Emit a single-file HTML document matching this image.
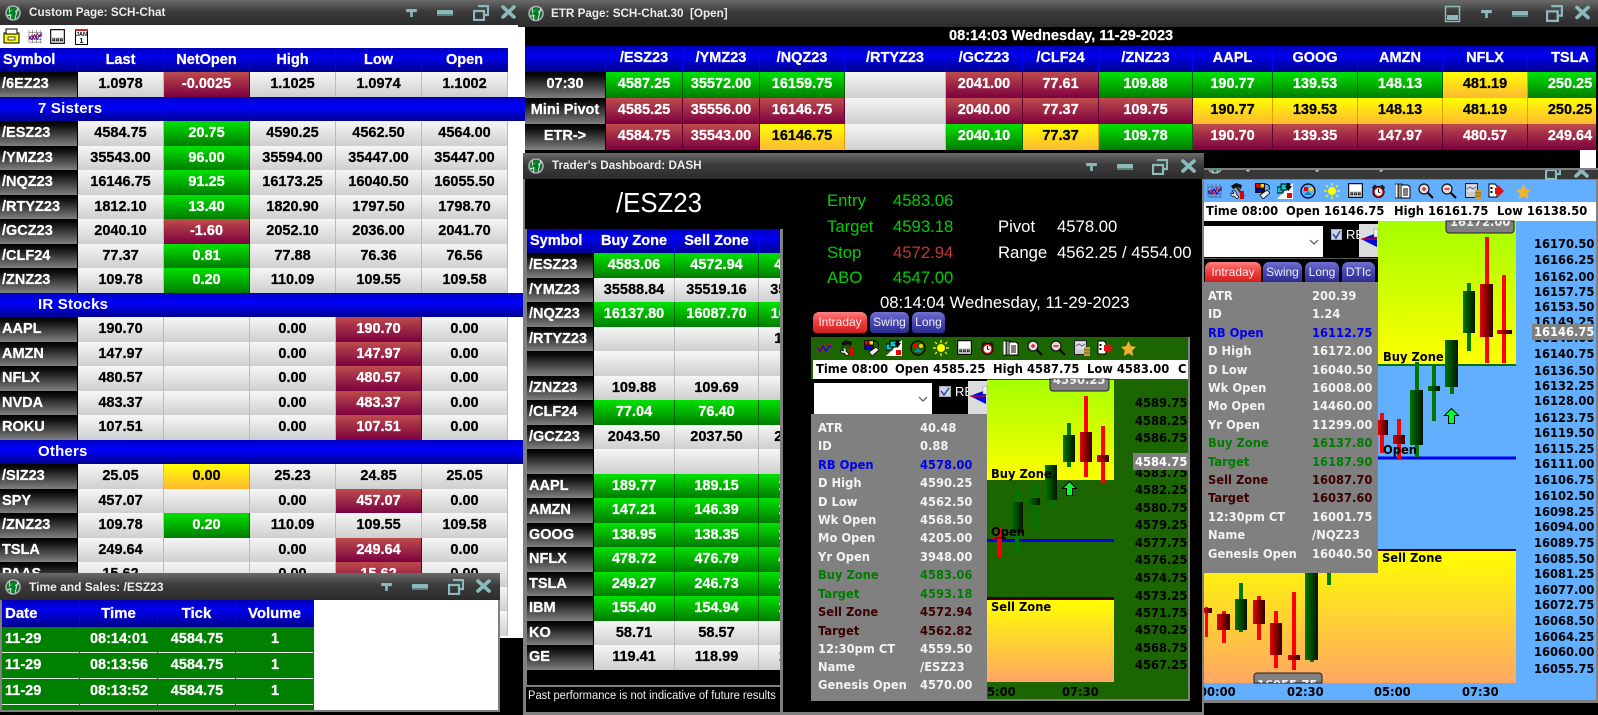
<!DOCTYPE html>
<html><head><meta charset="utf-8"><style>
html,body{margin:0;padding:0;background:#000;width:1598px;height:715px;overflow:hidden}
body{position:relative;font-family:"Liberation Sans",sans-serif}
.a{position:absolute;white-space:nowrap}
.box{position:absolute;overflow:hidden}
.tb{position:absolute;background:linear-gradient(#6a6a6a,#3c3c3c 45%,#2c2c2c)}
.t{position:absolute;font:bold 11.7px/14px "Liberation Sans",sans-serif;color:#ececec;white-space:nowrap}
.svg{position:absolute;left:0;top:0;width:1598px;height:715px;overflow:hidden}
.r{position:absolute;display:flex;height:24.5px}
.r b{display:block;flex:none;box-sizing:border-box;height:100%;text-align:center;font:bold 14.5px/24px "Liberation Sans",sans-serif;-webkit-text-stroke:.25px;border-right:1px solid #bbb;white-space:nowrap;overflow:hidden}
.s{background:linear-gradient(#000,#111 20%,#808080);color:#fff;text-align:left!important;padding-left:2px;border-right:1px solid #000!important}
.w{background:linear-gradient(#f6f6f6,#cfcfcf);color:#000}
.g{background:linear-gradient(#00e200,#007c00);color:#fff;border-right-color:#006000!important}
.m{background:linear-gradient(#bd4c4c,#7c0040);color:#fff;border-right-color:#600030!important}
.y{background:linear-gradient(#ffff00,#ffb733);color:#000;border-right-color:#e0a000!important}
.h{background:linear-gradient(#0000b8,#0000f0 35%,#00008c);color:#fff;border-right-color:#0000ff!important}
#L .r b:nth-child(1){width:78px}
#L .r b{width:86px}
#E .r b:nth-child(1){width:81px;text-align:center!important;padding:0}
#E .r b:nth-child(2),#E .r b:nth-child(3),#E .r b:nth-child(6){width:77px}
#E .r b:nth-child(4){width:85px}
#E .r b:nth-child(5){width:101px}
#E .r b:nth-child(7){width:76px}
#E .r b:nth-child(8){width:94px}
#E .r b:nth-child(9){width:80px}
#E .r b:nth-child(n+10){width:85px}
#E .r{height:26px}
#E .r b{line-height:25px}
#D .r b:nth-child(1){width:67px}
#D .r b:nth-child(2){width:81px}
#D .r b:nth-child(3){width:84px}
#D .r b:nth-child(4){width:84px}
.sec{position:absolute;left:0;width:525px;height:24px;background:linear-gradient(#0000c0,#0000ff 40%,#000090);color:#fff;font:bold 15px/24px "Liberation Sans",sans-serif;padding-left:38px;box-sizing:border-box;letter-spacing:.2px}
.reg{position:absolute;white-space:nowrap;font:16.7px/18px "Liberation Sans",sans-serif;color:#fff}
.k{position:absolute;white-space:nowrap;font:bold 12.5px/14px "DejaVu Sans",sans-serif;color:#f2f2f2;transform:scaleX(.92);transform-origin:0 0}
.kb{color:#0000f0}.kg{color:#007c00}.kd{color:#3c0000}
.ax{position:absolute;white-space:nowrap;font:bold 12.5px/14px "DejaVu Sans",sans-serif;color:#000;transform:scaleX(.92);transform-origin:0 0}
.tab{position:absolute;box-sizing:border-box;border-radius:6px 6px 3px 3px;color:#eee;font:12px/20px "Liberation Sans",sans-serif;text-align:center}
.tr{background:linear-gradient(#ff8080,#f03a3a 50%,#d02020)}
.tp{background:linear-gradient(#7070d0,#4646b0 50%,#2c2c90)}
.th{position:absolute;font:bold 15px/27px "Liberation Sans",sans-serif;-webkit-text-stroke:.25px;color:#fff;text-align:center;box-sizing:border-box;height:27px;background:linear-gradient(#0000b8,#0000f0 35%,#00008c);border-right:1px solid #0000ff}
.ts{position:absolute;font:bold 14.5px/25px "Liberation Sans",sans-serif;-webkit-text-stroke:.25px;color:#fff;text-align:center;box-sizing:border-box;height:25px}
</style></head><body>

<svg width="0" height="0" style="position:absolute">
<defs>
<linearGradient id="cg" x1="0" x2="1" y1="0" y2="0"><stop offset="0" stop-color="#007800"/><stop offset="1" stop-color="#001400"/></linearGradient>
<linearGradient id="cr" x1="0" x2="1" y1="0" y2="0"><stop offset="0" stop-color="#e60000"/><stop offset="1" stop-color="#2a0000"/></linearGradient>
<radialGradient id="gl" cx=".45" cy=".5" r=".55"><stop offset="0" stop-color="#30e030"/><stop offset=".6" stop-color="#0a7a20"/><stop offset="1" stop-color="#063"/></radialGradient>
<symbol id="glb" viewBox="0 0 18 18"><circle cx="9" cy="9" r="7" fill="url(#gl)" stroke="#aab" stroke-width="1.6"/><path d="M3 11C7 14 13 4 15 6M5 3l2 13M14 3l-3 12" stroke="#ddd" fill="none" stroke-width="1"/><path d="M5 9l6-4v8z" fill="#073"/></symbol>
<symbol id="pin" viewBox="0 0 12 9"><path d="M0 0h12v3.500H7.500V9h-3V3.500H0z" fill="#8cb9b9"/></symbol>
<symbol id="min" viewBox="0 0 16 6"><rect width="16" height="6" rx="1" fill="#8cb9b9"/><rect y="4" width="16" height="2" fill="#5c8080"/></symbol>
<symbol id="res" viewBox="0 0 16 16"><path d="M5 1h10v9h-3M1 6h10v9H1z" fill="none" stroke="#8cb9b9" stroke-width="2.200"/></symbol>
<symbol id="xx" viewBox="0 0 15 14"><path d="M2 2l11 10M13 2L2 12" stroke="#8cb9b9" stroke-width="3.600" stroke-linecap="round"/></symbol>
<symbol id="i1" viewBox="0 0 16 16"><path d="M1 1v13h14M1 4h14M1 8h14M1 11h14M5 1v14M9 1v14M13 1v14" stroke="#444" stroke-width=".5" fill="none"/><path d="M1 11l3-4 3 4 3-6 2 3 3-4" stroke="#e00" fill="none" stroke-width="1"/><path d="M1 8l3 3 3-5 3 5 3-5 2 1" stroke="#00e" fill="none" stroke-width="1"/></symbol>
<symbol id="i2" viewBox="0 0 16 16"><path d="M1 3l5-3 6 2-1 4-3-2-5 2z" fill="#111"/><path d="M6 5l2-1 7 9-2 1z" fill="#443300"/><path d="M10 8h4v8h-4z" fill="#d00"/><path d="M2 8c3-1 5 1 4 3l3 3-2 2-3-3c-2 1-4-1-3-3l2 1 1-1z" fill="#eee" stroke="#000" stroke-width=".7"/></symbol>
<symbol id="i3" viewBox="0 0 16 16"><rect x="1" y="0" width="10" height="10" fill="#111"/><rect x="2" y="1" width="3.500" height="3.500" fill="#e00"/><rect x="6.500" y="1" width="3.500" height="3.500" fill="#fc0"/><path d="M2 9l3.500-4 3.500 4z" fill="#00e"/><path d="M6 12l7-5 3 3-7 6z" fill="#eee" stroke="#000" stroke-width=".8"/><path d="M11 1c4 0 5 3 4 6" fill="none" stroke="#000"/></symbol>
<symbol id="i4" viewBox="0 0 16 16"><path d="M0 16L16 0v16z" fill="#fff"/><rect x="0" y="4" width="6" height="6" fill="#0cc" stroke="#000"/><rect x="4" y="1" width="6" height="6" fill="#0cc" stroke="#000"/><path d="M10 0h3v3h2l-3.500 5L8 3h2z" fill="#000"/><rect x="10" y="10" width="5" height="5" fill="#e00"/></symbol>
<symbol id="i5" viewBox="0 0 16 16"><circle cx="8" cy="8" r="7" fill="none" stroke="#000" stroke-width="1.200"/><rect x="4" y="4" width="4" height="4" fill="#e00"/><circle cx="11" cy="6" r="2" fill="#fc0"/><path d="M4 12l4-4 4 4z" fill="#08c"/></symbol>
<symbol id="i6" viewBox="0 0 16 16"><circle cx="8" cy="8" r="4" fill="#ff0"/><path d="M8 0v3M8 13v3M0 8h3M13 8h3M2 2l2 2M12 12l2 2M14 2l-2 2M2 14l2-2" stroke="#ff0" stroke-width="1.200"/></symbol>
<symbol id="i7" viewBox="0 0 16 16"><rect x=".7" y=".7" width="14.600" height="14.600" fill="#fff" stroke="#000" stroke-width="1.200"/><rect x="1.500" y="9" width="13" height="5.500" fill="#ccc"/><path d="M3 10.500h2v2H3zM7 10.500h2v2H7zM11 10.500h2v2h-2z" fill="none" stroke="#000" stroke-width=".8"/></symbol>
<symbol id="i8" viewBox="0 0 16 16"><circle cx="8" cy="9" r="6" fill="#e01010" stroke="#000"/><circle cx="8" cy="9" r="4" fill="#fff"/><path d="M8 6v3l2 1" stroke="#000" fill="none"/><path d="M1 4l3-3 2 1-4 4zM15 4l-3-3-2 1 4 4z" fill="#222"/></symbol>
<symbol id="i9" viewBox="0 0 16 16"><path d="M0 1h4v14H0zM3 1h4v14H3z" fill="#fff" stroke="#000" stroke-width=".8"/><path d="M6 2h7l2 2v11H6z" fill="#fff" stroke="#000"/><path d="M8 6h5M8 8h5M8 10h5M8 12h5" stroke="#000"/></symbol>
<symbol id="i10" viewBox="0 0 16 16"><circle cx="6" cy="6" r="5" fill="#ddd" stroke="#111" stroke-width="1.200"/><path d="M4 6h4M6 4v4" stroke="#e00" stroke-width="1.200"/><path d="M10 10l5 5" stroke="#000" stroke-width="2"/></symbol>
<symbol id="i11" viewBox="0 0 16 16"><circle cx="6" cy="6" r="5" fill="#ddd" stroke="#111" stroke-width="1.200"/><path d="M3.500 6h5" stroke="#e00" stroke-width="1.400"/><path d="M10 10l5 5" stroke="#000" stroke-width="2"/></symbol>
<symbol id="i12" viewBox="0 0 16 16"><rect x=".5" y=".5" width="12" height="14" fill="#ccc" stroke="#222"/><rect x="2" y="2" width="9" height="7" fill="#dde"/><path d="M2 6l3-2 3 2 3-2" stroke="#567" fill="none"/><path d="M10 7h6v9h-6z" fill="#c9a030"/><path d="M10 10h6M10 13h6" stroke="#664"/></symbol>
<symbol id="i13" viewBox="0 0 16 16"><path d="M1 1h6l2 2v11H1z" fill="#fff" stroke="#000"/><rect x="2.500" y="4" width="2" height="2" fill="#000"/><rect x="2.500" y="8" width="2" height="2" fill="#000"/><path d="M7 5h3V2l6 6-6 6v-3H7z" fill="#e01010"/></symbol>
<symbol id="i14" viewBox="0 0 16 16"><path d="M8 0l2.500 5.500 5.500.7-4 4 1 5.800-5-3-5 3 1-5.800-4-4 5.500-.7z" fill="#f2b230"/></symbol>
</defs></svg>

<!-- LEFT WINDOW -->
<div id="L" class="box" style="left:0;top:0;width:525px;height:638px;background:#fff">
<div class="tb" style="left:0;top:0;width:525px;height:25px"></div>
<svg class="svg" style="height:60px"><use href="#glb" x="4" y="3" width="18" height="20"/><use href="#pin" x="406" y="9" width="11" height="8"/><use href="#min" x="437" y="10" width="16" height="6"/><use href="#res" x="473" y="5" width="16" height="16"/><use href="#xx" x="501" y="5" width="15" height="14"/>
<path d="M4 33h15v10H4z" fill="#ff0" stroke="#000"/><path d="M6 29h11v5H6z" fill="#fff" stroke="#000"/><rect x="8" y="37" width="7" height="3" fill="#fff" stroke="#000" stroke-width=".7"/>
<use href="#i1" x="28" y="29" width="15" height="15"/>
<use href="#i7" x="50" y="29" width="15" height="15"/>
<path d="M75.500 29.500h12v15h-12z" fill="#fff" stroke="#000"/><path d="M75 29h13v2H75z" fill="#d22"/><text x="81.500" y="36" font-size="5.500" font-weight="bold" text-anchor="middle" font-family="Liberation Sans,sans-serif">JAN</text><text x="81.500" y="43" font-size="7" font-weight="bold" text-anchor="middle" font-family="Liberation Sans,sans-serif">1</text></svg>
<div class="t" style="left:29px;top:6px">Custom Page: SCH-Chat</div>
<div class="r" style="top:48px;height:24px"><b class="h" style="text-align:left;padding-left:3px;line-height:24px">Symbol</b><b class="h">Last</b><b class="h">NetOpen</b><b class="h">High</b><b class="h">Low</b><b class="h">Open</b></div>
<div class="r" style="top:72px"><b class="s">/6EZ23</b><b class="w">1.0978</b><b class="m">-0.0025</b><b class="w">1.1025</b><b class="w">1.0974</b><b class="w">1.1002</b></div>
<div class="sec" style="top:97px">7 Sisters</div>
<div class="r" style="top:121px"><b class="s">/ESZ23</b><b class="w">4584.75</b><b class="g">20.75</b><b class="w">4590.25</b><b class="w">4562.50</b><b class="w">4564.00</b></div>
<div class="r" style="top:145.5px"><b class="s">/YMZ23</b><b class="w">35543.00</b><b class="g">96.00</b><b class="w">35594.00</b><b class="w">35447.00</b><b class="w">35447.00</b></div>
<div class="r" style="top:170px"><b class="s">/NQZ23</b><b class="w">16146.75</b><b class="g">91.25</b><b class="w">16173.25</b><b class="w">16040.50</b><b class="w">16055.50</b></div>
<div class="r" style="top:194.5px"><b class="s">/RTYZ23</b><b class="w">1812.10</b><b class="g">13.40</b><b class="w">1820.90</b><b class="w">1797.50</b><b class="w">1798.70</b></div>
<div class="r" style="top:219px"><b class="s">/GCZ23</b><b class="w">2040.10</b><b class="m">-1.60</b><b class="w">2052.10</b><b class="w">2036.00</b><b class="w">2041.70</b></div>
<div class="r" style="top:243.5px"><b class="s">/CLF24</b><b class="w">77.37</b><b class="g">0.81</b><b class="w">77.88</b><b class="w">76.36</b><b class="w">76.56</b></div>
<div class="r" style="top:268px"><b class="s">/ZNZ23</b><b class="w">109.78</b><b class="g">0.20</b><b class="w">110.09</b><b class="w">109.55</b><b class="w">109.58</b></div>
<div class="sec" style="top:292.5px">IR Stocks</div>
<div class="r" style="top:317px"><b class="s">AAPL</b><b class="w">190.70</b><b class="w"></b><b class="w">0.00</b><b class="m">190.70</b><b class="w">0.00</b></div>
<div class="r" style="top:341.5px"><b class="s">AMZN</b><b class="w">147.97</b><b class="w"></b><b class="w">0.00</b><b class="m">147.97</b><b class="w">0.00</b></div>
<div class="r" style="top:366px"><b class="s">NFLX</b><b class="w">480.57</b><b class="w"></b><b class="w">0.00</b><b class="m">480.57</b><b class="w">0.00</b></div>
<div class="r" style="top:390.5px"><b class="s">NVDA</b><b class="w">483.37</b><b class="w"></b><b class="w">0.00</b><b class="m">483.37</b><b class="w">0.00</b></div>
<div class="r" style="top:415px"><b class="s">ROKU</b><b class="w">107.51</b><b class="w"></b><b class="w">0.00</b><b class="m">107.51</b><b class="w">0.00</b></div>
<div class="sec" style="top:439.5px">Others</div>
<div class="r" style="top:464px"><b class="s">/SIZ23</b><b class="w">25.05</b><b class="y">0.00</b><b class="w">25.23</b><b class="w">24.85</b><b class="w">25.05</b></div>
<div class="r" style="top:488.5px"><b class="s">SPY</b><b class="w">457.07</b><b class="w"></b><b class="w">0.00</b><b class="m">457.07</b><b class="w">0.00</b></div>
<div class="r" style="top:513px"><b class="s">/ZNZ23</b><b class="w">109.78</b><b class="g">0.20</b><b class="w">110.09</b><b class="w">109.55</b><b class="w">109.58</b></div>
<div class="r" style="top:537.5px"><b class="s">TSLA</b><b class="w">249.64</b><b class="w"></b><b class="w">0.00</b><b class="m">249.64</b><b class="w">0.00</b></div>
<div class="r" style="top:562px"><b class="s">PAAS</b><b class="w">15.62</b><b class="w"></b><b class="w">0.00</b><b class="m">15.62</b><b class="w">0.00</b></div>
<div class="r" style="top:586.5px"><b class="s"></b><b class="w"></b><b class="w"></b><b class="w"></b><b class="w"></b><b class="w"></b></div>
<div class="r" style="top:611px"><b class="s"></b><b class="w"></b><b class="w"></b><b class="w"></b><b class="w"></b><b class="w"></b></div>
</div>

<!-- ETR WINDOW -->
<div class="tb" style="left:518px;top:0;width:1080px;height:27px"></div>
<svg class="svg"><use href="#glb" x="527" y="3" width="18" height="21"/>
<rect x="1445.500" y="6.500" width="14" height="15" fill="none" stroke="#8cb9b9" stroke-width="1.500"/><rect x="1447" y="15" width="11" height="5" fill="#8cb9b9"/>
<use href="#pin" x="1481" y="10" width="11" height="8"/><use href="#min" x="1512" y="11" width="16" height="6"/><use href="#res" x="1546" y="5" width="17" height="17"/><use href="#xx" x="1575" y="5" width="15" height="15"/></svg>
<div class="t" style="left:551px;top:7px">ETR Page: SCH-Chat.30 &nbsp;[Open]</div>
<div class="box" style="left:525px;top:27px;width:1071px;height:123px;background:#000" id="E">
<div class="a" style="left:424px;top:0;height:19px;font:bold 14.6px/19px 'Liberation Sans',sans-serif;-webkit-text-stroke:.2px;color:#fff">08:14:03 Wednesday, 11-29-2023</div>
<div class="r" style="top:19px;left:0"><b class="h"></b><b class="h">/ESZ23</b><b class="h">/YMZ23</b><b class="h">/NQZ23</b><b class="h">/RTYZ23</b><b class="h">/GCZ23</b><b class="h">/CLF24</b><b class="h">/ZNZ23</b><b class="h">AAPL</b><b class="h">GOOG</b><b class="h">AMZN</b><b class="h">NFLX</b><b class="h">TSLA</b></div>
<div class="r" style="top:45px;left:0"><b class="s">07:30</b><b class="g">4587.25</b><b class="g">35572.00</b><b class="g">16159.75</b><b class="w"></b><b class="m">2041.00</b><b class="m">77.61</b><b class="g">109.88</b><b class="g">190.77</b><b class="g">139.53</b><b class="g">148.13</b><b class="y">481.19</b><b class="g">250.25</b></div>
<div class="r" style="top:71px;left:0"><b class="s">Mini Pivot</b><b class="m">4585.25</b><b class="m">35556.00</b><b class="m">16146.75</b><b class="w"></b><b class="m">2040.00</b><b class="m">77.37</b><b class="m">109.75</b><b class="y">190.77</b><b class="y">139.53</b><b class="y">148.13</b><b class="y">481.19</b><b class="y">250.25</b></div>
<div class="r" style="top:97px;left:0"><b class="s">ETR-&gt;</b><b class="m">4584.75</b><b class="m">35543.00</b><b class="y">16146.75</b><b class="w"></b><b class="g">2040.10</b><b class="y">77.37</b><b class="g">109.78</b><b class="m">190.70</b><b class="m">139.35</b><b class="m">147.97</b><b class="m">480.57</b><b class="m">249.64</b></div>
</div>
<div class="a" style="left:1580px;top:150px;width:16px;height:18px;background:#fff"></div>

<!-- TIME AND SALES -->
<div class="box" style="left:0;top:573px;width:500px;height:139px;background:#808080">
<div class="tb" style="left:0;top:0;width:500px;height:27px"></div>
<svg class="svg" style="height:27px"><use href="#glb" x="4" y="4" width="18" height="20"/><use href="#pin" x="381" y="10" width="11" height="8"/><use href="#min" x="412" y="11" width="16" height="6"/><use href="#res" x="448" y="6" width="16" height="16"/><use href="#xx" x="476" y="6" width="15" height="14"/></svg>
<div class="t" style="left:29px;top:7px;font-size:12px">Time and Sales: /ESZ23</div>
<div class="a" style="left:2px;top:27px;width:496px;height:110px;background:#fff"></div>
<div class="a" style="left:2px;top:54px;width:312px;height:83px;background:#008000"></div>
<div class="th" style="left:2px;top:27px;width:78px;text-align:left;padding-left:3px">Date</div>
<div class="th" style="left:80px;top:27px;width:78px">Time</div>
<div class="th" style="left:158px;top:27px;width:78px">Tick</div>
<div class="th" style="left:236px;top:27px;width:78px">Volume</div>
<div class="ts" style="left:2px;top:54px;width:78px;text-align:left;padding-left:3px">11-29</div><div class="ts" style="left:80px;top:54px;width:78px">08:14:01</div><div class="ts" style="left:158px;top:54px;width:78px">4584.75</div><div class="ts" style="left:236px;top:54px;width:78px">1</div>
<div class="ts" style="left:2px;top:80px;width:78px;text-align:left;padding-left:3px">11-29</div><div class="ts" style="left:80px;top:80px;width:78px">08:13:56</div><div class="ts" style="left:158px;top:80px;width:78px">4584.75</div><div class="ts" style="left:236px;top:80px;width:78px">1</div>
<div class="ts" style="left:2px;top:106px;width:78px;text-align:left;padding-left:3px">11-29</div><div class="ts" style="left:80px;top:106px;width:78px">08:13:52</div><div class="ts" style="left:158px;top:106px;width:78px">4584.75</div><div class="ts" style="left:236px;top:106px;width:78px">1</div>
<svg class="svg" style="height:139px"><path d="M2 79.500h77M80 79.500h77M158 79.500h77M236 79.500h77M2 105.500h77M80 105.500h77M158 105.500h77M236 105.500h77M2 131.500h77M80 131.500h77M158 131.500h77M236 131.500h77" stroke="#e8f0e8" fill="none"/></svg>
</div>

<!-- DASHBOARD -->
<div class="tb" style="left:523px;top:153px;width:681px;height:26px"></div>
<svg class="svg"><use href="#glb" x="527" y="156" width="18" height="20"/><use href="#pin" x="1086" y="163" width="11" height="8"/><use href="#min" x="1117" y="164" width="16" height="6"/><use href="#res" x="1152" y="159" width="16" height="16"/><use href="#xx" x="1181" y="159" width="15" height="14"/></svg>
<div class="t" style="left:552px;top:159px">Trader's Dashboard: DASH</div>
<div class="a" style="left:523px;top:179px;width:2px;height:536px;background:#808080"></div>
<div class="a" style="left:525px;top:179px;width:679px;height:536px;background:#000"></div>
<div class="a" style="left:616px;top:186px;font:28px/34px 'Liberation Sans',sans-serif;color:#fff;transform:scaleX(.92);transform-origin:0 0">/ESZ23</div>

<div class="a" style="left:523px;top:229px;width:260px;height:458px;background:#808080"></div>
<div class="a" style="left:527px;top:229px;width:253px;height:456px;background:#000"></div>
<div class="box" id="D" style="left:527px;top:229px;width:253px;height:456px">
<div class="r" style="top:0"><b class="h" style="text-align:left;padding-left:3px">Symbol</b><b class="h">Buy Zone</b><b class="h">Sell Zone</b><b class="h"></b></div>
<div class="r" style="top:24px"><b class="s">/ESZ23</b><b class="g">4583.06</b><b class="g">4572.94</b><b class="g">4578.00</b></div>
<div class="r" style="top:48.5px"><b class="s">/YMZ23</b><b class="w">35588.84</b><b class="w">35519.16</b><b class="w">35554.00</b></div>
<div class="r" style="top:73px"><b class="s">/NQZ23</b><b class="g">16137.80</b><b class="g">16087.70</b><b class="g">16112.75</b></div>
<div class="r" style="top:97.5px"><b class="s">/RTYZ23</b><b class="w"></b><b class="w"></b><b class="w">1812.10</b></div>
<div class="r" style="top:122px"><b class="s"></b><b class="w"></b><b class="w"></b><b class="w"></b></div>
<div class="r" style="top:146.5px"><b class="s">/ZNZ23</b><b class="w">109.88</b><b class="w">109.69</b><b class="w"></b></div>
<div class="r" style="top:171px"><b class="s">/CLF24</b><b class="g">77.04</b><b class="g">76.40</b><b class="g"></b></div>
<div class="r" style="top:195.5px"><b class="s">/GCZ23</b><b class="w">2043.50</b><b class="w">2037.50</b><b class="w">2040.50</b></div>
<div class="r" style="top:220px"><b class="s"></b><b class="w"></b><b class="w"></b><b class="w"></b></div>
<div class="r" style="top:244.5px"><b class="s">AAPL</b><b class="g">189.77</b><b class="g">189.15</b><b class="g">189.46</b></div>
<div class="r" style="top:269px"><b class="s">AMZN</b><b class="g">147.21</b><b class="g">146.39</b><b class="g">146.80</b></div>
<div class="r" style="top:293.5px"><b class="s">GOOG</b><b class="g">138.95</b><b class="g">138.35</b><b class="g">138.65</b></div>
<div class="r" style="top:318px"><b class="s">NFLX</b><b class="g">478.72</b><b class="g">476.79</b><b class="g">477.75</b></div>
<div class="r" style="top:342.5px"><b class="s">TSLA</b><b class="g">249.27</b><b class="g">246.73</b><b class="g">248.00</b></div>
<div class="r" style="top:367px"><b class="s">IBM</b><b class="g">155.40</b><b class="g">154.94</b><b class="g">155.17</b></div>
<div class="r" style="top:391.5px"><b class="s">KO</b><b class="w">58.71</b><b class="w">58.57</b><b class="w">58.64</b></div>
<div class="r" style="top:416px"><b class="s">GE</b><b class="w">119.41</b><b class="w">118.99</b><b class="w">119.20</b></div>
</div>
<div class="a" style="left:523px;top:687px;width:3px;height:27px;background:#808080"></div>
<div class="a" style="left:523px;top:712px;width:260px;height:2px;background:#808080"></div>
<div class="a" style="left:780px;top:687px;width:3px;height:27px;background:#808080"></div>
<div class="a" style="left:528px;top:688px;font:12.2px/14px 'Liberation Sans',sans-serif;color:#f0f0f0;transform:scaleX(.917);transform-origin:0 0">Past performance is not indicative of future results</div>

<div class="reg" style="left:827px;top:192px;color:#00d000">Entry</div><div class="reg" style="left:893px;top:192px;color:#00d000">4583.06</div>
<div class="reg" style="left:827px;top:218px;color:#00d000">Target</div><div class="reg" style="left:893px;top:218px;color:#00d000">4593.18</div>
<div class="reg" style="left:827px;top:244px;color:#00d000">Stop</div><div class="reg" style="left:893px;top:244px;color:#c03838">4572.94</div>
<div class="reg" style="left:827px;top:269px;color:#00d000">ABO</div><div class="reg" style="left:893px;top:269px;color:#00d000">4547.00</div>
<div class="reg" style="left:998px;top:218px">Pivot</div><div class="reg" style="left:1057px;top:218px">4578.00</div>
<div class="reg" style="left:998px;top:244px">Range</div><div class="reg" style="left:1057px;top:244px">4562.25 / 4554.00</div>
<div class="reg" style="left:880px;top:294px">08:14:04 Wednesday, 11-29-2023</div>

<div class="tab tr" style="left:813px;top:312px;width:54px;height:21px">Intraday</div>
<div class="tab tp" style="left:870px;top:312px;width:39px;height:21px">Swing</div>
<div class="tab tp" style="left:912px;top:312px;width:33px;height:21px">Long</div>

<!-- DASH CHART -->
<div class="a" style="left:811px;top:337px;width:379px;height:364px;background:#808080"></div>
<div class="box" style="left:811px;top:337px;width:377px;height:362px;background:#1b6600">
<div class="a" style="left:2px;top:23px;width:375px;height:19px;background:#fff"></div>
<div class="ax" style="left:5px;top:25px">Time 08:00</div><div class="ax" style="left:84px;top:25px">Open 4585.25</div><div class="ax" style="left:182px;top:25px">High 4587.75</div><div class="ax" style="left:276px;top:25px">Low 4583.00</div><div class="ax" style="left:367px;top:25px">C</div>
<div class="a" style="left:0;top:42px;width:176px;height:36px;background:#000"></div>
</div>
<svg class="svg" style="clip-path:inset(337px 410px 16px 811px)">
<use href="#i1" x="816" y="340" width="16" height="16"/><use href="#i2" x="840" y="340" width="16" height="16"/><use href="#i3" x="863" y="340" width="16" height="16"/><use href="#i4" x="886" y="340" width="16" height="16"/><use href="#i5" x="910" y="340" width="16" height="16"/><use href="#i6" x="933" y="340" width="16" height="16"/><use href="#i7" x="957" y="340" width="15" height="15"/><use href="#i8" x="980" y="340" width="15" height="16"/><use href="#i9" x="1003" y="340" width="16" height="16"/><use href="#i10" x="1027" y="340" width="16" height="16"/><use href="#i11" x="1050" y="340" width="16" height="16"/><use href="#i12" x="1074" y="340" width="16" height="16"/><use href="#i13" x="1097" y="340" width="16" height="16"/><use href="#i14" x="1121" y="341" width="15" height="15"/>
<defs><linearGradient id="bz" x1="0" x2="0" y1="0" y2="1"><stop offset="0" stop-color="#a4ff00"/><stop offset="1" stop-color="#ffff00"/></linearGradient><linearGradient id="sz" x1="0" x2="0" y1="0" y2="1"><stop offset="0" stop-color="#ffff00"/><stop offset="1" stop-color="#ffa664"/></linearGradient></defs>
<rect x="987" y="380" width="127" height="100" fill="url(#bz)"/>
<rect x="987" y="597" width="127" height="3" fill="#3c0000"/><rect x="987" y="600" width="127" height="82" fill="url(#sz)"/>
<rect x="987" y="539" width="127" height="3" fill="#0000f0"/>
<path d="M1050 379h59v9a3 3 0 0 1-3 3h-53a3 3 0 0 1-3-3z" fill="#808080" stroke="#222"/>
<g fill="#ff0000"><rect x="1084" y="396" width="4" height="81"/><rect x="1101" y="426" width="4" height="57"/><rect x="997" y="527" width="5" height="30"/></g>
<g fill="#007800"><rect x="1067" y="423" width="4" height="44"/><rect x="1049" y="465" width="4" height="42"/><rect x="1033" y="483" width="4" height="46"/><rect x="1015" y="490" width="4" height="63"/></g>
<rect x="1080" y="432" width="12" height="30" fill="url(#cr)"/><rect x="1097" y="455" width="12" height="7" fill="url(#cr)"/><rect x="992" y="537" width="14" height="2" fill="url(#cr)"/>
<rect x="1063" y="435" width="12" height="27" fill="url(#cg)"/><rect x="1045" y="465" width="12" height="35" fill="url(#cg)"/><rect x="1028" y="498" width="12" height="7" fill="url(#cg)"/><rect x="1011" y="502" width="12" height="31" fill="url(#cg)"/>
<path d="M1069.500 481.500l7 7h-4v7h-6v-7h-4z" fill="#00ff30" stroke="#000"/>
</svg>
<div class="ax" style="left:1053px;top:373px;color:#eee;clip-path:inset(6px 0 0 0)">4590.25</div>
<div class="ax" style="left:991px;top:467px">Buy Zone</div>
<div class="ax" style="left:991px;top:525px">Open</div>
<div class="ax" style="left:991px;top:600px">Sell Zone</div>
<div class="a" style="left:814px;top:383px;width:118px;height:31px;background:#fff"></div>
<svg class="svg"><path d="M919 397l4 4 4-4" stroke="#555" fill="none" stroke-width="1.200"/><rect x="939.500" y="386.500" width="11" height="10" fill="#c8d4f0" stroke="#aaa"/><path d="M941 391l3 4 5-7" stroke="#334488" fill="none" stroke-width="1.500"/><rect x="968" y="381" width="19" height="33" fill="#dcdcdc"/><path d="M970 396l16-6v14z" fill="#0000e0"/><path d="M970 396h16" stroke="#e00" stroke-width="1.200"/><rect x="983" y="386" width="4" height="8" fill="#eee" stroke="#999" stroke-width=".5"/></svg>
<div class="a" style="left:955px;top:384px;font:13px/15px 'Liberation Sans',sans-serif;color:#fff;width:13px;overflow:hidden">RB</div>
<div class="a" style="left:811px;top:414px;width:176px;height:287px;background:#808080"></div>
<div class="k" style="left:818px;top:421px">ATR</div><div class="k" style="left:920px;top:421px">40.48</div>
<div class="k" style="left:818px;top:439px">ID</div><div class="k" style="left:920px;top:439px">0.88</div>
<div class="k kb" style="left:818px;top:458px">RB Open</div><div class="k kb" style="left:920px;top:458px">4578.00</div>
<div class="k" style="left:818px;top:476px">D High</div><div class="k" style="left:920px;top:476px">4590.25</div>
<div class="k" style="left:818px;top:495px">D Low</div><div class="k" style="left:920px;top:495px">4562.50</div>
<div class="k" style="left:818px;top:513px">Wk Open</div><div class="k" style="left:920px;top:513px">4568.50</div>
<div class="k" style="left:818px;top:531px">Mo Open</div><div class="k" style="left:920px;top:531px">4205.00</div>
<div class="k" style="left:818px;top:550px">Yr Open</div><div class="k" style="left:920px;top:550px">3948.00</div>
<div class="k kg" style="left:818px;top:568px">Buy Zone</div><div class="k kg" style="left:920px;top:568px">4583.06</div>
<div class="k kg" style="left:818px;top:587px">Target</div><div class="k kg" style="left:920px;top:587px">4593.18</div>
<div class="k kd" style="left:818px;top:605px">Sell Zone</div><div class="k kd" style="left:920px;top:605px">4572.94</div>
<div class="k kd" style="left:818px;top:624px">Target</div><div class="k kd" style="left:920px;top:624px">4562.82</div>
<div class="k" style="left:818px;top:642px">12:30pm CT</div><div class="k" style="left:920px;top:642px">4559.50</div>
<div class="k" style="left:818px;top:660px">Name</div><div class="k" style="left:920px;top:660px">/ESZ23</div>
<div class="k" style="left:818px;top:678px">Genesis Open</div><div class="k" style="left:920px;top:678px">4570.00</div>
<div class="box" style="left:1125px;top:396px;width:63px;height:280px">
<div class="ax" style="left:10px;top:0">4589.75</div><div class="ax" style="left:10px;top:18px">4588.25</div><div class="ax" style="left:10px;top:35px">4586.75</div><div class="ax" style="left:10px;top:70px">4583.75</div><div class="ax" style="left:10px;top:87px">4582.25</div><div class="ax" style="left:10px;top:105px">4580.75</div><div class="ax" style="left:10px;top:122px">4579.25</div><div class="ax" style="left:10px;top:140px">4577.75</div><div class="ax" style="left:10px;top:157px">4576.25</div><div class="ax" style="left:10px;top:175px">4574.75</div><div class="ax" style="left:10px;top:193px">4573.25</div><div class="ax" style="left:10px;top:210px">4571.75</div><div class="ax" style="left:10px;top:227px">4570.25</div><div class="ax" style="left:10px;top:245px">4568.75</div><div class="ax" style="left:10px;top:262px">4567.25</div>
<div class="a" style="left:8px;top:57px;width:55px;height:17px;background:#808080"></div><div class="ax" style="left:10px;top:58.5px;color:#fff">4584.75</div>
</div>
<div class="ax" style="left:987px;top:685px">5:00</div><div class="ax" style="left:1062px;top:685px">07:30</div>
<div class="a" style="left:1202px;top:179px;width:2px;height:536px;background:#808080"></div>
<div class="a" style="left:1175px;top:712px;width:29px;height:3px;background:#808080"></div>
<div class="a" style="left:525px;top:712px;width:679px;height:3px;background:#808080"></div>

<!-- NQ CHART WINDOW -->
<div class="tb" style="left:1204px;top:168px;width:394px;height:12px;background:#383838"></div>
<div class="a" style="left:1202px;top:179px;width:396px;height:524px;background:#808080"></div>
<div class="box" style="left:1204px;top:180px;width:392px;height:520px;background:#62aeff">
<div class="a" style="left:0;top:22px;width:392px;height:19px;background:#fff"></div>
<div class="ax" style="left:2px;top:24px">Time 08:00</div><div class="ax" style="left:82px;top:24px">Open 16146.75</div><div class="ax" style="left:190px;top:24px">High 16161.75</div><div class="ax" style="left:293px;top:24px">Low 16138.50</div>
<div class="a" style="left:0;top:41px;width:174px;height:61px;background:#000"></div>
</div>
<svg class="svg" style="clip-path:inset(180px 2px 15px 1204px)">
<use href="#i1" x="1207" y="183" width="16" height="16"/><use href="#i2" x="1230" y="183" width="16" height="16"/><use href="#i3" x="1254" y="183" width="16" height="16"/><use href="#i4" x="1277" y="183" width="16" height="16"/><use href="#i5" x="1300" y="183" width="16" height="16"/><use href="#i6" x="1324" y="183" width="16" height="16"/><use href="#i7" x="1348" y="183" width="15" height="15"/><use href="#i8" x="1371" y="183" width="15" height="16"/><use href="#i9" x="1395" y="183" width="16" height="16"/><use href="#i10" x="1418" y="183" width="16" height="16"/><use href="#i11" x="1441" y="183" width="16" height="16"/><use href="#i12" x="1465" y="183" width="16" height="16"/><use href="#i13" x="1488" y="183" width="16" height="16"/><use href="#i14" x="1516" y="184" width="15" height="15"/>
<rect x="1378" y="221" width="138" height="143" fill="url(#bz)"/><rect x="1378" y="364" width="138" height="2" fill="#007000"/>
<rect x="1378" y="549" width="138" height="2" fill="#3c0000"/><rect x="1204" y="551" width="312" height="132" fill="url(#sz)"/>
<rect x="1378" y="456.500" width="138" height="3" fill="#0000f0"/>
<path d="M1446 221h68v9a3 3 0 0 1-3 3h-62a3 3 0 0 1-3-3z" fill="#808080" stroke="#222"/>
<path d="M1254 683v-7a3 3 0 0 1 3-3h62a3 3 0 0 1 3 3v7z" fill="#808080" stroke="#222"/>
<g fill="#ff0000"><rect x="1485" y="237" width="4" height="126"/><rect x="1502" y="275" width="4" height="88"/><rect x="1397" y="419" width="4" height="41"/><rect x="1380" y="413" width="4" height="40"/><rect x="1205" y="607" width="3" height="30"/><rect x="1222" y="611" width="4" height="32"/><rect x="1257" y="596" width="4" height="44"/><rect x="1274" y="611" width="4" height="57"/><rect x="1292" y="592" width="4" height="78"/></g>
<g fill="#007800"><rect x="1467" y="283" width="4" height="68"/><rect x="1450" y="387" width="4" height="7"/><rect x="1432" y="365" width="4" height="56"/><rect x="1415" y="362" width="4" height="95"/><rect x="1239" y="583" width="4" height="49"/><rect x="1327" y="573" width="4" height="12"/><rect x="1310" y="660" width="4" height="2"/></g>
<rect x="1480" y="284" width="13" height="53" fill="url(#cr)"/><rect x="1497" y="330" width="15" height="4" fill="url(#cr)"/><rect x="1393" y="435" width="12" height="9" fill="url(#cr)"/><rect x="1378" y="420" width="10" height="15" fill="url(#cr)"/><rect x="1204" y="608" width="8" height="5" fill="url(#cr)"/><rect x="1217" y="614" width="13" height="16" fill="url(#cr)"/><rect x="1253" y="600" width="12" height="24" fill="url(#cr)"/><rect x="1270" y="623" width="12" height="32" fill="url(#cr)"/><rect x="1288" y="655" width="12" height="5" fill="url(#cr)"/>
<rect x="1463" y="291" width="12" height="42" fill="url(#cg)"/><rect x="1445" y="340" width="13" height="47" fill="url(#cg)"/><rect x="1428" y="386" width="12" height="5" fill="url(#cg)"/><rect x="1410" y="390" width="13" height="55" fill="url(#cg)"/><rect x="1235" y="599" width="12" height="31" fill="url(#cg)"/><rect x="1305" y="573" width="13" height="87" fill="url(#cg)"/>
<path d="M1451.500 408.500l7 7h-4v8h-6v-8h-4z" fill="#00ff30" stroke="#000"/>
</svg>
<div class="ax" style="left:1450px;top:215px;color:#eee;clip-path:inset(6px 0 0 0)">16172.00</div>
<div class="ax" style="left:1257px;top:678px;color:#eee;clip-path:inset(0 0 9px 0)">16055.75</div>
<div class="ax" style="left:1383px;top:350px">Buy Zone</div>
<div class="ax" style="left:1383px;top:443px">Open</div>
<div class="ax" style="left:1382px;top:551px">Sell Zone</div>
<div class="a" style="left:1204px;top:226px;width:119px;height:31px;background:#fff"></div>
<svg class="svg"><path d="M1310 240l4 4 4-4" stroke="#555" fill="none" stroke-width="1.200"/><rect x="1331.500" y="229.500" width="10" height="10" fill="#c8d4f0" stroke="#aaa"/><path d="M1333 234l3 4 4-7" stroke="#334488" fill="none" stroke-width="1.500"/><rect x="1359" y="224" width="19" height="33" fill="#dcdcdc"/><path d="M1361 239l16-6v14z" fill="#0000e0"/><path d="M1361 239h16" stroke="#e00" stroke-width="1.200"/><rect x="1374" y="229" width="4" height="8" fill="#eee" stroke="#999" stroke-width=".5"/></svg>
<div class="a" style="left:1346px;top:227px;font:13px/15px 'Liberation Sans',sans-serif;color:#fff;width:13px;overflow:hidden">RB</div>
<div class="a" style="left:1204px;top:258px;width:174px;height:1px;background:#555"></div>
<div class="tab tr" style="left:1205px;top:262px;width:56px;height:20px;border-radius:6px 6px 0 0">Intraday</div>
<div class="tab tp" style="left:1263px;top:262px;width:39px;height:20px;border-radius:6px 6px 0 0">Swing</div>
<div class="tab tp" style="left:1305px;top:262px;width:34px;height:20px;border-radius:6px 6px 0 0">Long</div>
<div class="tab tp" style="left:1342px;top:262px;width:33px;height:20px;border-radius:6px 6px 0 0">DTIc</div>
<div class="a" style="left:1204px;top:282px;width:174px;height:291px;background:#808080"></div>
<div class="k" style="left:1208px;top:289px">ATR</div><div class="k" style="left:1312px;top:289px">200.39</div>
<div class="k" style="left:1208px;top:307px">ID</div><div class="k" style="left:1312px;top:307px">1.24</div>
<div class="k kb" style="left:1208px;top:326px">RB Open</div><div class="k kb" style="left:1312px;top:326px">16112.75</div>
<div class="k" style="left:1208px;top:344px">D High</div><div class="k" style="left:1312px;top:344px">16172.00</div>
<div class="k" style="left:1208px;top:363px">D Low</div><div class="k" style="left:1312px;top:363px">16040.50</div>
<div class="k" style="left:1208px;top:381px">Wk Open</div><div class="k" style="left:1312px;top:381px">16008.00</div>
<div class="k" style="left:1208px;top:399px">Mo Open</div><div class="k" style="left:1312px;top:399px">14460.00</div>
<div class="k" style="left:1208px;top:418px">Yr Open</div><div class="k" style="left:1312px;top:418px">11299.00</div>
<div class="k kg" style="left:1208px;top:436px">Buy Zone</div><div class="k kg" style="left:1312px;top:436px">16137.80</div>
<div class="k kg" style="left:1208px;top:455px">Target</div><div class="k kg" style="left:1312px;top:455px">16187.90</div>
<div class="k kd" style="left:1208px;top:473px">Sell Zone</div><div class="k kd" style="left:1312px;top:473px">16087.70</div>
<div class="k kd" style="left:1208px;top:491px">Target</div><div class="k kd" style="left:1312px;top:491px">16037.60</div>
<div class="k" style="left:1208px;top:510px">12:30pm CT</div><div class="k" style="left:1312px;top:510px">16001.75</div>
<div class="k" style="left:1208px;top:528px">Name</div><div class="k" style="left:1312px;top:528px">/NQZ23</div>
<div class="k" style="left:1208px;top:547px">Genesis Open</div><div class="k" style="left:1312px;top:547px">16040.50</div>
<div class="box" style="left:1530px;top:230px;width:66px;height:450px">
<div class="ax" style="left:4px;top:7px">16170.50</div><div class="ax" style="left:4px;top:23px">16166.25</div><div class="ax" style="left:4px;top:40px">16162.00</div><div class="ax" style="left:4px;top:55px">16157.75</div><div class="ax" style="left:4px;top:70px">16153.50</div><div class="ax" style="left:4px;top:85px">16149.25</div><div class="ax" style="left:4px;top:101px">16145.00</div><div class="ax" style="left:4px;top:117px">16140.75</div><div class="ax" style="left:4px;top:134px">16136.50</div><div class="ax" style="left:4px;top:149px">16132.25</div><div class="ax" style="left:4px;top:164px">16128.00</div><div class="ax" style="left:4px;top:181px">16123.75</div><div class="ax" style="left:4px;top:196px">16119.50</div><div class="ax" style="left:4px;top:212px">16115.25</div><div class="ax" style="left:4px;top:227px">16111.00</div><div class="ax" style="left:4px;top:243px">16106.75</div><div class="ax" style="left:4px;top:259px">16102.50</div><div class="ax" style="left:4px;top:275px">16098.25</div><div class="ax" style="left:4px;top:290px">16094.00</div><div class="ax" style="left:4px;top:306px">16089.75</div><div class="ax" style="left:4px;top:322px">16085.50</div><div class="ax" style="left:4px;top:337px">16081.25</div><div class="ax" style="left:4px;top:353px">16077.00</div><div class="ax" style="left:4px;top:368px">16072.75</div><div class="ax" style="left:4px;top:384px">16068.50</div><div class="ax" style="left:4px;top:400px">16064.25</div><div class="ax" style="left:4px;top:415px">16060.00</div><div class="ax" style="left:4px;top:432px">16055.75</div>
<div class="a" style="left:2px;top:94px;width:62px;height:16px;background:#808080"></div><div class="ax" style="left:4px;top:95px;color:#fff">16146.75</div>
</div>
<div class="box" style="left:1204px;top:684px;width:392px;height:16px">
<div class="ax" style="left:-5px;top:1px">00:00</div><div class="ax" style="left:83px;top:1px">02:30</div><div class="ax" style="left:170px;top:1px">05:00</div><div class="ax" style="left:258px;top:1px">07:30</div>
</div>
<div class="box" style="left:1204px;top:168px;width:394px;height:12px">
<div class="t" style="left:26px;top:-9px;color:#ddd">/NQZ23</div><div class="t" style="left:111px;top:-9px;color:#ddd">[15 Minutes]</div>
<svg style="position:absolute;left:0;top:0;width:394px;height:12px" viewBox="1204 168 394 12"><use href="#glb" x="1206" y="156" width="18" height="20"/><use href="#res" x="1545" y="164" width="16" height="16"/><use href="#xx" x="1574" y="164" width="15" height="14"/></svg>
</div>
<div class="a" style="left:1204px;top:168px;width:394px;height:2px;background:#808080"></div>
</body></html>
